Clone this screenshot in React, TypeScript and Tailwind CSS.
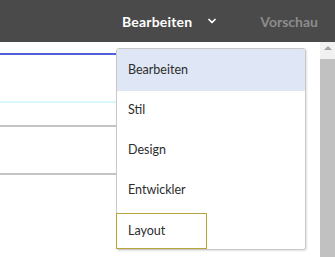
import { ChevronDown } from "lucide-react";

const items = ["Bearbeiten", "Stil", "Design", "Entwickler", "Layout"];

export default function App() {
  return (
    <div className="relative w-[335px] h-[257px] overflow-hidden bg-white font-['Lato',sans-serif]">
      {/* top bar */}
      <header className="h-[42px] bg-[#4a4a4a] flex items-center justify-end pr-[17px] text-[14px] font-bold">
        <span className="text-white tracking-[0.2px]">Bearbeiten</span>
        <ChevronDown size={12} strokeWidth={3.5} className="text-white ml-[14px]" />
        <span className="text-[#8c8c8c] ml-[42px]">Vorschau</span>
      </header>

      <div className="flex h-[215px]">
        {/* page canvas behind the menu */}
        <div className="flex-1 flex flex-col">
          <div className="mt-[11px] h-[2px] w-[116px] bg-[#5060d8]" />
          <div className="mt-[46px] h-[2px] w-[116px] bg-[#d8f8fc]" />
          <div className="mt-[22px] h-[2px] w-[116px] bg-[#c4c4c4]" />
          <div className="mt-[46px] h-[2px] w-[116px] bg-[#c4c4c4]" />
        </div>
        {/* scrollbar */}
        <div className="w-[15px] bg-[#f1f1f1] flex flex-col items-center">
          <div className="mt-[4px] w-0 h-0 border-x-[4px] border-x-transparent border-b-[4px] border-b-[#a3a3a3]" />
          <div className="mt-[9px] w-[15px] flex-1 bg-[#c1c1c1]" />
        </div>
      </div>

      {/* dropdown menu */}
      <div className="absolute left-[116px] top-[48px] w-[190px] h-[202px] bg-white border border-[#c8c8c8] rounded-[3px] shadow-[1px_1px_2px_rgba(0,0,0,0.12)] flex flex-col text-[12.5px] text-[#2c2c2c]">
        {items.map((label, i) => (
          <div
            key={label}
            className={
              i === 0
                ? "h-[42px] bg-[#dfe6f5] flex items-center pl-[11px] rounded-t-[2px]"
                : i === 4
                ? "mt-[3px] h-[36px] w-[91px] border border-[#b8a53a] flex items-center pl-[11px] -ml-px"
                : "h-[40px] flex items-center pl-[11px]"
            }
          >
            {label}
          </div>
        ))}
      </div>
    </div>
  );
}
